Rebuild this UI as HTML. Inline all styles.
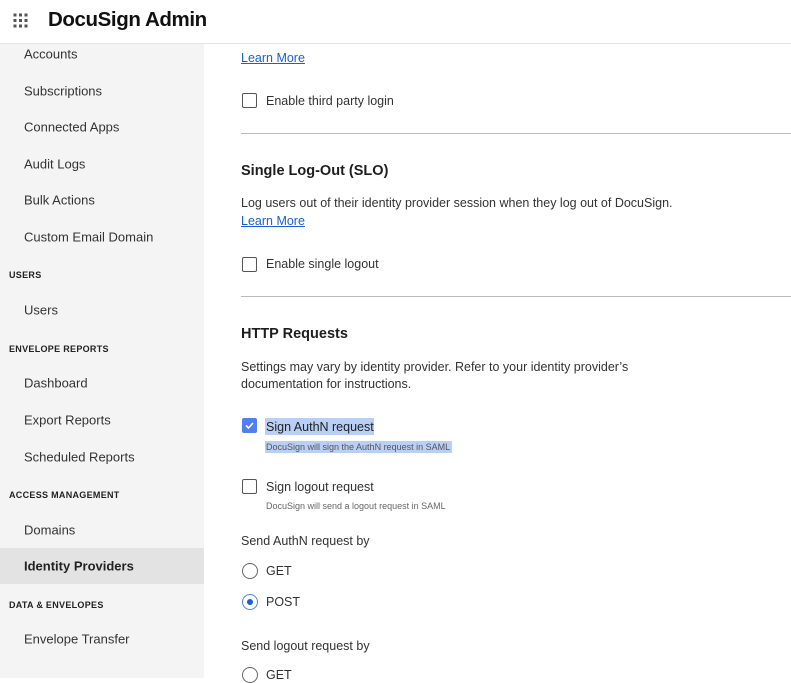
<!DOCTYPE html>
<html><head><style>
*{margin:0;padding:0;box-sizing:border-box}
body{width:791px;height:678px;overflow:hidden;background:#fff;font-family:"Liberation Sans",sans-serif;color:#1e1e1e;position:relative}
.a{position:absolute;white-space:nowrap}
#hdr{position:absolute;left:0;top:0;width:791px;height:44px;background:#fff;border-bottom:1px solid #e4e4e4;z-index:2}
#side{position:absolute;left:0;top:44px;width:204px;height:634px;background:#f4f4f4}
.it{position:absolute;left:24px;font-size:13px;color:#333;transform:translateY(-50%)}
.sec{position:absolute;left:9px;font-size:9px;font-weight:bold;color:#222;letter-spacing:.3px;transform:translateY(-50%)}
.c{position:absolute;left:241px;font-size:12.5px;color:#333;transform:translateY(-50%);white-space:nowrap}
.h{font-size:14.5px;font-weight:bold;color:#1e1e1e}
.lk{color:#1a5fd6;text-decoration:underline}
.cb{position:absolute;left:242px;width:15px;height:15px;border:1.5px solid #555;border-radius:2px;background:#fff}
.rd{position:absolute;left:242px;width:16px;height:16px;border:1.5px solid #666;border-radius:50%;background:#fff}
.hr{position:absolute;left:241px;width:550px;height:1px;background:#bbb}
.sm{font-size:9px;color:#555}
</style></head><body>
<div id="hdr">
<svg class="a" style="left:13px;top:13px" width="15" height="15" viewBox="0 0 15 15" fill="#555"><rect x="0.5" y="0.5" width="3" height="3"/><rect x="6" y="0.5" width="3" height="3"/><rect x="11.5" y="0.5" width="3" height="3"/><rect x="0.5" y="6" width="3" height="3"/><rect x="6" y="6" width="3" height="3"/><rect x="11.5" y="6" width="3" height="3"/><rect x="0.5" y="11.5" width="3" height="3"/><rect x="6" y="11.5" width="3" height="3"/><rect x="11.5" y="11.5" width="3" height="3"/></svg>
<div class="a" style="left:48px;top:8px;font-size:20.5px;font-weight:bold;color:#111;letter-spacing:-.4px">DocuSign Admin</div>
</div>
<div id="side"></div>
<div class="a" style="left:0;top:548px;width:204px;height:36px;background:#e3e3e3"></div>
<div class="it" style="top:54px">Accounts</div>
<div class="it" style="top:91px">Subscriptions</div>
<div class="it" style="top:127px">Connected Apps</div>
<div class="it" style="top:164px">Audit Logs</div>
<div class="it" style="top:200px">Bulk Actions</div>
<div class="it" style="top:237px">Custom Email Domain</div>
<div class="sec" style="top:275px">USERS</div>
<div class="it" style="top:310px">Users</div>
<div class="sec" style="top:349px">ENVELOPE REPORTS</div>
<div class="it" style="top:383px">Dashboard</div>
<div class="it" style="top:420px">Export Reports</div>
<div class="it" style="top:457px">Scheduled Reports</div>
<div class="sec" style="top:495px">ACCESS MANAGEMENT</div>
<div class="it" style="top:530px">Domains</div>
<div class="it" style="top:566px;font-weight:bold;color:#222">Identity Providers</div>
<div class="sec" style="top:605px">DATA &amp; ENVELOPES</div>
<div class="it" style="top:639px">Envelope Transfer</div>

<div class="c lk" style="top:58px">Learn More</div>
<div class="cb" style="top:93px"></div>
<div class="c" style="left:266px;top:101px">Enable third party login</div>
<div class="hr" style="top:133px"></div>
<div class="c h" style="top:171px">Single Log-Out (SLO)</div>
<div class="c" style="top:203px">Log users out of their identity provider session when they log out of DocuSign.</div>
<div class="c lk" style="top:221px">Learn More</div>
<div class="cb" style="top:257px"></div>
<div class="c" style="left:266px;top:264px">Enable single logout</div>
<div class="hr" style="top:296px"></div>
<div class="c h" style="top:334px">HTTP Requests</div>
<div class="c" style="top:367px">Settings may vary by identity provider. Refer to your identity provider’s</div>
<div class="c" style="top:384px">documentation for instructions.</div>
<div class="a" style="left:242px;top:418px;width:15px;height:15px;background:#4f7ff0;border-radius:2px"><svg width="15" height="15" viewBox="0 0 15 15"><path d="M4 7.5l2.5 2.5 4.5-5" stroke="#fff" stroke-width="1.6" fill="none"/></svg></div>
<div class="a" style="left:265px;top:418px;width:109px;height:17px;background:#b9cff5"></div>
<div class="c" style="left:266px;top:427px;color:#1e1e1e">Sign AuthN request</div>
<div class="a" style="left:265px;top:441px;width:187px;height:12px;background:#b9cff5"></div>
<div class="c sm" style="left:266px;top:447px">DocuSign will sign the AuthN request in SAML</div>
<div class="cb" style="top:479px"></div>
<div class="c" style="left:266px;top:487px">Sign logout request</div>
<div class="c sm" style="left:266px;top:506px;color:#666">DocuSign will send a logout request in SAML</div>
<div class="c" style="top:541px">Send AuthN request by</div>
<div class="rd" style="top:563px"></div>
<div class="c" style="left:266px;top:571px">GET</div>
<div class="rd" style="top:594px;border-color:#4f7ff0"><div style="position:absolute;left:3.5px;top:3.5px;width:6px;height:6px;border-radius:50%;background:#1a5fd6"></div></div>
<div class="c" style="left:266px;top:602px">POST</div>
<div class="c" style="top:646px">Send logout request by</div>
<div class="rd" style="top:667px"></div>
<div class="c" style="left:266px;top:675px">GET</div>
</body></html>
